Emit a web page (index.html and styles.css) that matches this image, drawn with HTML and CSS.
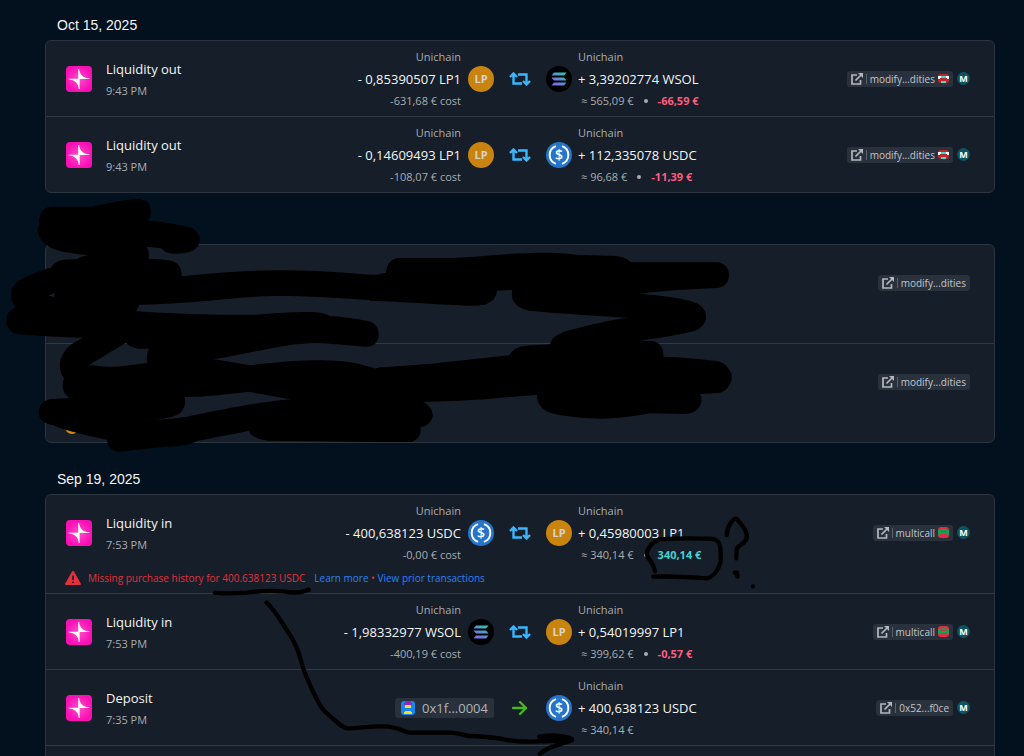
FILE: index.html
```html
<!DOCTYPE html>
<html lang="en">
<head>
  <meta charset="UTF-8">
  <meta name="viewport" content="width=device-width, initial-scale=1">
  <title>Transactions</title>
  <link rel="stylesheet" href="styles.css">
</head>
<body>
  <svg class="defs" aria-hidden="true">
    <defs>
      <radialGradient id="pink">
        <stop offset="0" stop-color="#ff4fd0"/>
        <stop offset="1" stop-color="#fb0fb4"/>
      </radialGradient>
      <linearGradient id="sol" x1="0" y1="1" x2="1" y2="0">
        <stop offset="0" stop-color="#8d5cf0"/>
        <stop offset="0.5" stop-color="#5b8fd6"/>
        <stop offset="1" stop-color="#22d3a4"/>
      </linearGradient>
    </defs>
    <symbol id="unichain" viewBox="0 0 26 26">
      <rect width="26" height="26" rx="4" fill="url(#pink)"/>
      <path d="M13 2.500c.7 6.200 3.800 9.400 10.500 10.100v.5H13zM13 23.500c-.7-6.300-3.800-9.500-10.500-10.200v-.6H13z" fill="#fff"/>
      <path d="M12.500 3v10M13.300 13v10" stroke="#fff" stroke-width=".8"/>
    </symbol>
    <symbol id="wsol" viewBox="0 0 26 26">
      <circle cx="13" cy="13" r="13" fill="#000"/>
      <path d="M8 6.500h12.500l-2.500 3H5.500zM5.500 11.500H18l2.500 3H8zM8 16.500h12.500l-2.500 3H5.500z" fill="url(#sol)"/>
    </symbol>
    <symbol id="swap" viewBox="0 0 22 14">
      <path d="M1 5l3.500-3.500L8 5M4.500 2v9.500H13M9 2.500h8.500V12M14 9l3.500 3.500L21 9" fill="none" stroke="#38b6ff" stroke-width="2.400"/>
    </symbol>
    <symbol id="arrow" viewBox="0 0 16 16">
      <path d="M1 8h13M8 2l6 6-6 6" fill="none" stroke="#49b814" stroke-width="2.400" stroke-linecap="round" stroke-linejoin="round"/>
    </symbol>
    <symbol id="external" viewBox="0 0 12 12">
      <path d="M6 2H1v9h8.500V7M4.500 7.500L10 2" fill="none" stroke="#b4b8bc" stroke-width="1.700"/>
      <path d="M7 0h5v5z" fill="#b4b8bc"/>
    </symbol>
    <symbol id="warn" viewBox="0 0 16 14">
      <path d="M8 0c.5 0 .8.200 1 .6l6.800 12c.4.700 0 1.400-.8 1.400H1c-.8 0-1.200-.7-.8-1.400L7 .6c.2-.4.500-.6 1-.6z" fill="#e3303d"/>
      <path d="M8 4.500v4.500M8 10.500v1.500" stroke="#151e29" stroke-width="1.600"/>
    </symbol>
    <symbol id="face-a" viewBox="0 0 11 11">
      <rect y="1" width="11" height="9" rx="3" fill="#c4242e"/>
      <path d="M0 3h11v3H0z" fill="#fff"/>
      <path d="M3 3h5v2H3zM3 8h5v2H3z" fill="#2ce5cf"/>
      <path d="M2 5h7v1H2z" fill="#b3272f"/>
    </symbol>
    <symbol id="face-b" viewBox="0 0 11 11">
      <rect width="11" height="11" rx="3" fill="#e22b45"/>
      <path d="M0 3h3V2h5v1h3v5H0z" fill="#17a052"/>
      <path d="M3 3h1v1h3V3h1v2H3zM2 7h7v1H2z" fill="#e22b45"/>
    </symbol>
    <symbol id="face-c" viewBox="0 0 14 14">
      <rect width="14" height="14" rx="3" fill="#1687ee"/>
      <path d="M4 0h6v2h1v2H3V2h1z" fill="#9424c4"/>
      <path d="M4 4h6v3H4zM4 10h6v1h1v2H3v-2h1z" fill="#fbdc1b"/>
    </symbol>
    <symbol id="arcs" viewBox="0 0 26 26">
      <path d="M10 4.200a9.300 9.300 0 0 0 0 17.600M16 4.200a9.300 9.300 0 0 1 0 17.600" fill="none" stroke="#fff" stroke-width="1.900"/>
    </symbol>
  </svg>

  <main class="history">
    <section class="day">
      <h2 class="date">Oct 15, 2025</h2>
      <div class="card">
        <article class="row">
          <div class="main">
            <div class="side from">
              <div class="kind">
                <svg class="token"><use href="#unichain"/></svg>
                <div class="kind-text">
                  <h3 class="title">Liquidity out</h3>
                  <div class="time">9:43 PM</div>
                </div>
              </div>
              <div class="sent">
                <div class="amounts">
                  <div class="small">Unichain</div>
                  <div class="amount">- 0,85390507 LP1</div>
                  <div class="small">-631,68 € cost</div>
                </div>
                <span class="token lp">LP</span>
              </div>
            </div>
            <svg class="swap"><use href="#swap"/></svg>
            <div class="side to">
              <div class="received">
                <svg class="token"><use href="#wsol"/></svg>
                <div class="amounts">
                  <div class="small">Unichain</div>
                  <div class="amount">+ 3,39202774 WSOL</div>
                  <div class="small value"><span>≈ 565,09 €</span><i class="dot"></i><b class="loss">-66,59 €</b></div>
                </div>
              </div>
              <div class="links">
                <a class="chip" href="#"><svg class="ext"><use href="#external"/></svg><span class="label">modify...dities</span><svg class="face"><use href="#face-a"/></svg></a>
                <span class="badge">M</span>
              </div>
            </div>
          </div>
        </article>
        <article class="row">
          <div class="main">
            <div class="side from">
              <div class="kind">
                <svg class="token"><use href="#unichain"/></svg>
                <div class="kind-text">
                  <h3 class="title">Liquidity out</h3>
                  <div class="time">9:43 PM</div>
                </div>
              </div>
              <div class="sent">
                <div class="amounts">
                  <div class="small">Unichain</div>
                  <div class="amount">- 0,14609493 LP1</div>
                  <div class="small">-108,07 € cost</div>
                </div>
                <span class="token lp">LP</span>
              </div>
            </div>
            <svg class="swap"><use href="#swap"/></svg>
            <div class="side to">
              <div class="received">
                <span class="token usdc"><svg class="arcs"><use href="#arcs"/></svg>$</span>
                <div class="amounts">
                  <div class="small">Unichain</div>
                  <div class="amount">+ 112,335078 USDC</div>
                  <div class="small value"><span>≈ 96,68 €</span><i class="dot"></i><b class="loss">-11,39 €</b></div>
                </div>
              </div>
              <div class="links">
                <a class="chip" href="#"><svg class="ext"><use href="#external"/></svg><span class="label">modify...dities</span><svg class="face"><use href="#face-a"/></svg></a>
                <span class="badge">M</span>
              </div>
            </div>
          </div>
        </article>
      </div>
    </section>

    <section class="day">
      <div class="date"></div>
      <div class="card">
        <article class="row">
          <div class="main">
            <div class="side from"></div>
            <span></span>
            <div class="side to last">
              <a class="chip" href="#"><svg class="ext"><use href="#external"/></svg><span class="label">modify...dities</span></a>
            </div>
          </div>
          <div class="notice"></div>
        </article>
        <article class="row">
          <div class="main">
            <div class="side from"></div>
            <span></span>
            <div class="side to last">
              <a class="chip" href="#"><svg class="ext"><use href="#external"/></svg><span class="label">modify...dities</span></a>
            </div>
          </div>
          <div class="notice"><i class="info"></i></div>
        </article>
      </div>
    </section>

    <section class="day">
      <h2 class="date">Sep 19, 2025</h2>
      <div class="card">
        <article class="row">
          <div class="main">
            <div class="side from">
              <div class="kind">
                <svg class="token"><use href="#unichain"/></svg>
                <div class="kind-text">
                  <h3 class="title">Liquidity in</h3>
                  <div class="time">7:53 PM</div>
                </div>
              </div>
              <div class="sent">
                <div class="amounts">
                  <div class="small">Unichain</div>
                  <div class="amount">- 400,638123 USDC</div>
                  <div class="small">-0,00 € cost</div>
                </div>
                <span class="token usdc"><svg class="arcs"><use href="#arcs"/></svg>$</span>
              </div>
            </div>
            <svg class="swap"><use href="#swap"/></svg>
            <div class="side to">
              <div class="received">
                <span class="token lp">LP</span>
                <div class="amounts">
                  <div class="small">Unichain</div>
                  <div class="amount">+ 0,45980003 LP1</div>
                  <div class="small value"><span>≈ 340,14 €</span><i class="dot"></i><b class="gain">340,14 €</b></div>
                </div>
              </div>
              <div class="links">
                <a class="chip" href="#"><svg class="ext"><use href="#external"/></svg><span class="label">multicall</span><svg class="face"><use href="#face-b"/></svg></a>
                <span class="badge">M</span>
              </div>
            </div>
          </div>
          <div class="notice">
            <svg class="warn"><use href="#warn"/></svg>
            <span class="missing">Missing purchase history for 400.638123 USDC</span>
            <span><a href="#">Learn more</a> • <a href="#">View prior transactions</a></span>
          </div>
        </article>
        <article class="row">
          <div class="main">
            <div class="side from">
              <div class="kind">
                <svg class="token"><use href="#unichain"/></svg>
                <div class="kind-text">
                  <h3 class="title">Liquidity in</h3>
                  <div class="time">7:53 PM</div>
                </div>
              </div>
              <div class="sent">
                <div class="amounts">
                  <div class="small">Unichain</div>
                  <div class="amount">- 1,98332977 WSOL</div>
                  <div class="small">-400,19 € cost</div>
                </div>
                <svg class="token"><use href="#wsol"/></svg>
              </div>
            </div>
            <svg class="swap"><use href="#swap"/></svg>
            <div class="side to">
              <div class="received">
                <span class="token lp">LP</span>
                <div class="amounts">
                  <div class="small">Unichain</div>
                  <div class="amount">+ 0,54019997 LP1</div>
                  <div class="small value"><span>≈ 399,62 €</span><i class="dot"></i><b class="loss">-0,57 €</b></div>
                </div>
              </div>
              <div class="links">
                <a class="chip" href="#"><svg class="ext"><use href="#external"/></svg><span class="label">multicall</span><svg class="face"><use href="#face-b"/></svg></a>
                <span class="badge">M</span>
              </div>
            </div>
          </div>
        </article>
        <article class="row">
          <div class="main">
            <div class="side from">
              <div class="kind">
                <svg class="token"><use href="#unichain"/></svg>
                <div class="kind-text">
                  <h3 class="title">Deposit</h3>
                  <div class="time">7:35 PM</div>
                </div>
              </div>
              <a class="address" href="#"><svg class="avatar"><use href="#face-c"/></svg>0x1f...0004</a>
            </div>
            <svg class="arrow"><use href="#arrow"/></svg>
            <div class="side to">
              <div class="received">
                <span class="token usdc"><svg class="arcs"><use href="#arcs"/></svg>$</span>
                <div class="amounts">
                  <div class="small">Unichain</div>
                  <div class="amount">+ 400,638123 USDC</div>
                  <div class="small value"><span>≈ 340,14 €</span></div>
                </div>
              </div>
              <div class="links">
                <a class="chip" href="#"><svg class="ext"><use href="#external"/></svg><span class="label">0x52...f0ce</span></a>
                <span class="badge">M</span>
              </div>
            </div>
          </div>
        </article>
        <article class="row">
          <div class="main"></div>
        </article>
      </div>
    </section>
  </main>

  <!-- pen marks -->
  <svg class="ink" viewBox="0 0 1024 756" aria-hidden="true">
    <g transform="translate(0 190) scale(.33333)">
      <path fill-rule="evenodd" d="M152 50L275 50C330 40 380 27 415 27C440 27 453 45 453 65Q453 80 443 93C490 95 530 103 562 110C585 113 599 130 599 150C599 180 570 192 515 191Q495 190 484 175L440 170Q449 185 446 207C480 207 505 210 515 213C535 218 546 235 545 259C640 250 720 241 850 241C950 241 1050 250 1140 256L1140 332C1000 322 900 317 820 318C700 320 600 340 418 344L409 364C520 372 650 376 770 374C850 367 900 365 940 366Q970 367 990 378C1030 379 1070 387 1105 394C1130 400 1138 420 1136 440C1130 465 1115 472 1090 470C1020 462 960 457 885 463C800 476 720 495 642 508Q690 515 748 526C840 515 900 511 970 511C1040 513 1060 516 1127 536L1140 532L1140 756L800 752Q755 745 746 722C690 735 640 742 594 752Q570 765 530 769L480 772L360 785Q325 785 321 750C260 735 200 725 160 706C130 700 116 685 116 668C118 640 135 628 155 627L210 624C190 612 182 590 192 566C180 550 178 530 180 515C190 480 210 460 250 443C180 442 120 438 60 433C30 430 18 410 19 390C20 370 30 360 48 352C35 340 30 320 34 300C40 275 90 250 152 233Q165 213 190 209L232 207Q245 198 265 196C220 190 170 185 148 170C120 155 110 130 114 115Q120 105 117 95C117 70 130 52 152 50ZM145 317L162 309L164 321ZM268 524L378 458Q390 472 415 476L447 476Q437 495 442 519L370 528Q330 534 268 524ZM428 690Q490 690 560 680C690 655 750 640 870 628L746 605C690 612 620 620 554 621Q560 650 540 670Q510 690 428 690Z"/>
    </g>
    <g transform="translate(370 240) scale(.33333)">
      <path d="M0 105L20 104L48 98C50 70 65 55 90 54L250 54C340 50 420 38 540 38Q600 40 615 44L740 48Q770 52 782 67L1040 67C1065 68 1077 85 1077 105C1077 130 1060 143 1040 144C960 147 880 152 812 161C880 168 950 175 980 190C1000 200 1009 215 1008 235C1005 255 990 268 970 274C920 287 870 293 812 302L850 303C870 307 882 325 880 350C930 351 1000 358 1040 363C1065 367 1072 380 1084 400C1090 430 1070 455 1045 459L990 462Q997 475 993 490C985 512 970 522 940 522L840 520C800 527 750 536 690 536C630 535 580 528 545 520C515 510 500 490 501 464C400 472 300 484 160 485Q185 500 189 525Q185 555 152 562Q155 595 125 606L0 606L0 382L14 386Q30 380 60 380C180 375 260 362 418 346Q430 320 470 317L540 313C545 290 570 278 600 270C660 255 720 240 772 233C680 226 580 222 480 212C440 205 420 185 427 150L381 152Q380 180 345 194Q320 198 290 197C190 192 100 186 0 182Z"/>
    </g>
    <g class="pen" transform="translate(40 460) scale(.33333)">
      <path d="M525 398C550 402 580 400 620 398C660 392 700 392 730 394C760 400 790 396 806 389"/>
    </g>
    <g class="pen" transform="translate(250 590) scale(.33333)">
      <path d="M50 38C75 60 90 90 120 135C150 180 150 210 165 250C190 310 210 350 225 365C260 395 275 413 292 415C330 416 350 408 400 409C450 410 460 428 480 428L600 428C640 430 640 437 660 438C720 440 750 445 770 450C820 458 870 457 965 448"/>
      <path d="M870 440C900 434 940 435 966 447L900 448L868 440M966 450C930 465 890 470 870 492"/>
    </g>
    <g class="pen" transform="translate(500 500) scale(.33333)">
      <path d="M465 214C460 185 440 175 440 160C445 135 460 125 480 118C540 114 600 115 640 117C665 122 662 150 662 185C655 210 640 232 620 235C580 232 520 228 460 230"/>
      <path d="M680 105C682 75 700 55 710 56C725 75 745 95 740 115C735 135 710 135 710 150L709 175M704 218L710 217L713 230M759 259v.1"/>
    </g>
  </svg>
</body>
</html>
```
FILE: styles.css
```css
*{
  box-sizing:border-box;
  margin:0;
  padding:0;
}
body{
  position:relative;
  height:100vh;
  overflow:hidden;
  padding:8px 29px 0 45px;
  background-color:#02111d;
  color:#f4f5f6;
  font-family:"Open Sans", "Noto Sans", sans-serif;
  font-size:13px;
}
a{
  color:#2f81f7;
  text-decoration:none;
}
svg{
  display:block;
  flex:none;
}
.defs{
  position:absolute;
  width:0;
  height:0;
}
.day{
  margin-bottom:19px;
}
.date{
  height:32px;
  padding:6px 12px 4px;
  font-family:"Liberation Sans", Arial, sans-serif;
  font-size:14px;
  font-weight:normal;
  line-height:22px;
}
.card{
  border:1px solid #2b343f;
  border-radius:6px;
  background-color:#151e29;
}
.row{
  padding:4px 0;
}
.row + .row{
  border-top:1px solid #2f3843;
}
.main{
  display:grid;
  grid-template-columns:1fr 52px 1fr;
  align-items:center;
  justify-items:center;
  min-height:67px;
}
.side{
  display:flex;
  align-items:center;
  justify-content:space-between;
  width:100%;
}
.from{
  padding-left:20px;
}
.to{
  padding-right:24px;
}
.last{
  justify-content:flex-end;
}
.kind{
  display:flex;
  align-items:center;
  gap:14px;
}
.kind-text{
  padding-top:3px;
}
.title{
  font-size:13px;
  font-weight:normal;
  line-height:22px;
}
.time{
  color:#a9adb2;
  font-size:11px;
  line-height:22px;
}
.sent, .received{
  display:flex;
  align-items:center;
  gap:6px;
}
.sent{
  gap:7px;
  text-align:right;
}
.amount{
  line-height:22px;
}
.small{
  color:#a9adb2;
  font-size:11px;
  line-height:22px;
}
.value{
  display:flex;
  align-items:center;
  gap:10px;
  padding-left:3px;
}
.dot{
  width:4px;
  height:4px;
  border-radius:50%;
  background-color:#a9adb2;
}
.loss{
  color:#ff5c7f;
}
.gain{
  color:#41d3d8;
}
.token{
  flex:none;
  width:26px;
  height:26px;
}
.lp, .usdc{
  border-radius:50%;
  line-height:26px;
  text-align:center;
}
.lp{
  background-color:#c9830f;
  color:#d6d3cd;
  font-size:11px;
  font-weight:bold;
}
.usdc{
  position:relative;
  background-color:#2775ca;
  color:#fff;
  font-size:14px;
  font-weight:600;
}
.arcs{
  position:absolute;
  top:0;
  left:0;
  width:26px;
  height:26px;
}
.swap{
  width:22px;
  height:14px;
}
.arrow{
  width:16px;
  height:16px;
}
.links{
  display:flex;
  align-items:center;
  gap:4px;
}
.chip{
  display:flex;
  align-items:center;
  gap:3px;
  height:16px;
  padding:0 4px;
  border-radius:3px;
  background-color:#28313c;
  color:#c3c6ca;
  font-size:10px;
  line-height:16px;
}
.label{
  position:relative;
  padding-left:4px;
}
/* thin divider between the icon and the label */
.label::before{
  content:"";
  position:absolute;
  top:3px;
  bottom:3px;
  left:0;
  width:1px;
  background-color:#59616b;
}
.ext{
  width:12px;
  height:12px;
}
.face{
  width:11px;
  height:11px;
}
.badge{
  width:13px;
  height:13px;
  border-radius:50%;
  background-color:#0d5361;
  color:#fff;
  font-size:9px;
  font-weight:bold;
  line-height:13px;
  text-align:center;
}
.address{
  display:flex;
  align-items:center;
  gap:7px;
  height:20px;
  padding:0 6px;
  border-radius:3px;
  background-color:#28313c;
  color:#b0b4b9;
  font-size:13px;
}
.avatar{
  width:14px;
  height:14px;
}
.notice{
  display:flex;
  align-items:center;
  gap:7px;
  height:23px;
  padding-left:19px;
  color:#e3303d;
  font-size:10px;
}
.missing{
  padding-right:2px;
}
.warn{
  width:16px;
  height:14px;
}
.info{
  width:14px;
  height:14px;
  border-radius:50%;
  background-color:#d48a12;
}
.ink{
  position:absolute;
  top:0;
  left:0;
  width:1024px;
  height:756px;
  pointer-events:none;
}
.pen{
  fill:none;
  stroke:#000;
  stroke-width:13px;
  stroke-linecap:round;
  stroke-linejoin:round;
}
```
